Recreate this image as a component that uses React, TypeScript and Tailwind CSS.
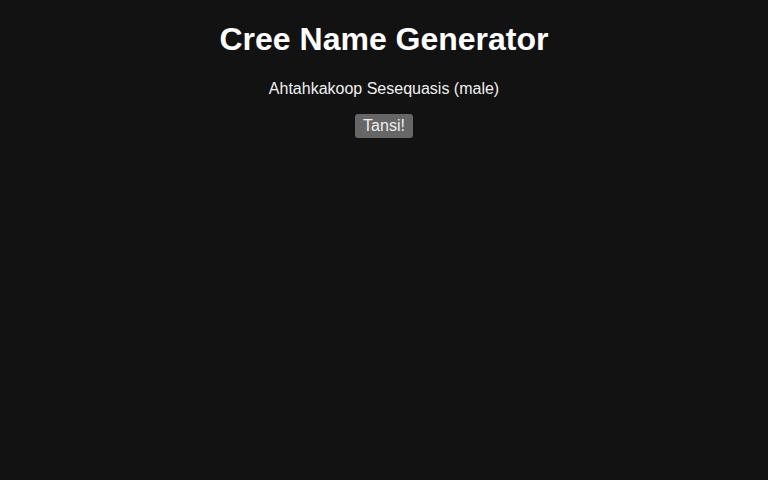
export default function App() {
  return (
    <div
      className="min-h-screen bg-[#121212] text-white text-center"
      style={{ fontFamily: '"Liberation Sans", Arial, sans-serif' }}
    >
      <div className="pt-[21px] flex flex-col items-center">
        <h1 className="text-[32px] leading-[37px] font-bold">Cree Name Generator</h1>
        <p className="mt-[22px] text-base leading-[18px] text-[#f0f0f0]">
          Ahtahkakoop Sesequasis (male)
        </p>
        <button className="mt-4 px-2 py-[3px] text-base leading-[18px] bg-[#666666] text-[#f0f0f0] rounded-[3px]">
          Tansi!
        </button>
      </div>
    </div>
  );
}
